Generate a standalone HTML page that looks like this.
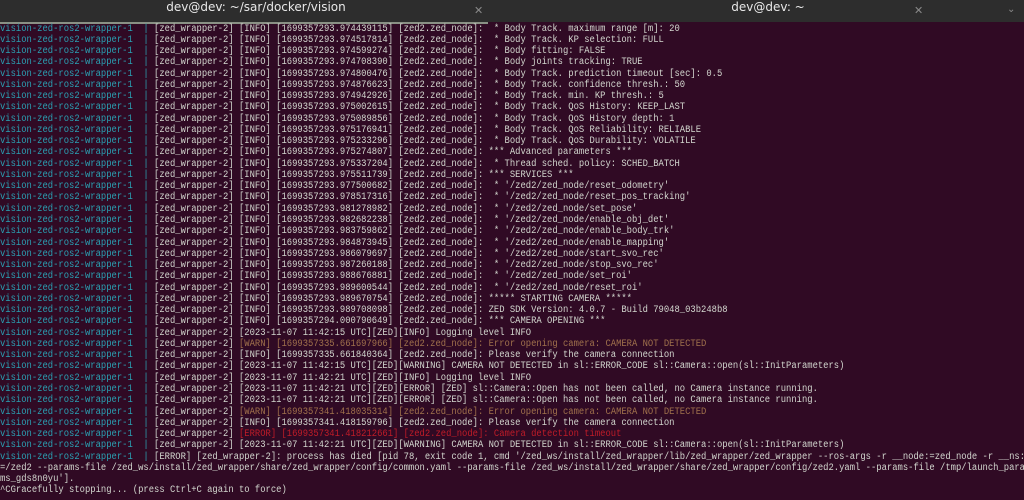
<!DOCTYPE html>
<html><head><meta charset="utf-8"><style>
html,body{margin:0;padding:0;width:1024px;height:500px;overflow:hidden;background:#300a24;}
.bar{position:absolute;left:0;top:0;width:1024px;height:22px;background:#2d2d2d;}
.t{position:absolute;top:0;height:22px;line-height:22px;color:#e8e8e8;font:12px "DejaVu Sans","Liberation Sans",sans-serif;text-align:center;}
.x{position:absolute;top:4px;color:#8a8a8a;font:11px "DejaVu Sans",sans-serif;}
.ul{position:absolute;left:0;top:22px;width:488px;height:2px;background:#8a9185;}
pre{position:absolute;left:0;top:23.5px;margin:0;font:10px/11.27px "Liberation Mono",monospace;color:#d3d7cf;white-space:pre;transform:scaleX(0.885);transform-origin:0 0;}
.c{color:#2aa1b3}.w{color:#a0714c}.e{color:#c01c28}
</style></head><body>
<div class="bar"></div>
<div class="t" style="left:0;width:512px">dev@dev: ~/sar/docker/vision</div>
<div class="x" style="left:474px">✕</div>
<div class="t" style="left:512px;width:512px">dev@dev: ~</div>
<div class="x" style="left:914px">✕</div>
<div class="x" style="left:1007px;font-size:10px">⌄</div>
<div class="ul"></div>
<pre><span class="c">vision-zed-ros2-wrapper-1  | </span>[zed_wrapper-2] [INFO] [1699357293.974439115] [zed2.zed_node]:  * Body Track. maximum range [m]: 20
<span class="c">vision-zed-ros2-wrapper-1  | </span>[zed_wrapper-2] [INFO] [1699357293.974517814] [zed2.zed_node]:  * Body Track. KP selection: FULL
<span class="c">vision-zed-ros2-wrapper-1  | </span>[zed_wrapper-2] [INFO] [1699357293.974599274] [zed2.zed_node]:  * Body fitting: FALSE
<span class="c">vision-zed-ros2-wrapper-1  | </span>[zed_wrapper-2] [INFO] [1699357293.974708390] [zed2.zed_node]:  * Body joints tracking: TRUE
<span class="c">vision-zed-ros2-wrapper-1  | </span>[zed_wrapper-2] [INFO] [1699357293.974800476] [zed2.zed_node]:  * Body Track. prediction timeout [sec]: 0.5
<span class="c">vision-zed-ros2-wrapper-1  | </span>[zed_wrapper-2] [INFO] [1699357293.974876623] [zed2.zed_node]:  * Body Track. confidence thresh.: 50
<span class="c">vision-zed-ros2-wrapper-1  | </span>[zed_wrapper-2] [INFO] [1699357293.974942926] [zed2.zed_node]:  * Body Track. min. KP thresh.: 5
<span class="c">vision-zed-ros2-wrapper-1  | </span>[zed_wrapper-2] [INFO] [1699357293.975002615] [zed2.zed_node]:  * Body Track. QoS History: KEEP_LAST
<span class="c">vision-zed-ros2-wrapper-1  | </span>[zed_wrapper-2] [INFO] [1699357293.975089856] [zed2.zed_node]:  * Body Track. QoS History depth: 1
<span class="c">vision-zed-ros2-wrapper-1  | </span>[zed_wrapper-2] [INFO] [1699357293.975176941] [zed2.zed_node]:  * Body Track. QoS Reliability: RELIABLE
<span class="c">vision-zed-ros2-wrapper-1  | </span>[zed_wrapper-2] [INFO] [1699357293.975233296] [zed2.zed_node]:  * Body Track. QoS Durability: VOLATILE
<span class="c">vision-zed-ros2-wrapper-1  | </span>[zed_wrapper-2] [INFO] [1699357293.975274807] [zed2.zed_node]: *** Advanced parameters ***
<span class="c">vision-zed-ros2-wrapper-1  | </span>[zed_wrapper-2] [INFO] [1699357293.975337204] [zed2.zed_node]:  * Thread sched. policy: SCHED_BATCH
<span class="c">vision-zed-ros2-wrapper-1  | </span>[zed_wrapper-2] [INFO] [1699357293.975511739] [zed2.zed_node]: *** SERVICES ***
<span class="c">vision-zed-ros2-wrapper-1  | </span>[zed_wrapper-2] [INFO] [1699357293.977500682] [zed2.zed_node]:  * '/zed2/zed_node/reset_odometry'
<span class="c">vision-zed-ros2-wrapper-1  | </span>[zed_wrapper-2] [INFO] [1699357293.978517316] [zed2.zed_node]:  * '/zed2/zed_node/reset_pos_tracking'
<span class="c">vision-zed-ros2-wrapper-1  | </span>[zed_wrapper-2] [INFO] [1699357293.981278982] [zed2.zed_node]:  * '/zed2/zed_node/set_pose'
<span class="c">vision-zed-ros2-wrapper-1  | </span>[zed_wrapper-2] [INFO] [1699357293.982682238] [zed2.zed_node]:  * '/zed2/zed_node/enable_obj_det'
<span class="c">vision-zed-ros2-wrapper-1  | </span>[zed_wrapper-2] [INFO] [1699357293.983759862] [zed2.zed_node]:  * '/zed2/zed_node/enable_body_trk'
<span class="c">vision-zed-ros2-wrapper-1  | </span>[zed_wrapper-2] [INFO] [1699357293.984873945] [zed2.zed_node]:  * '/zed2/zed_node/enable_mapping'
<span class="c">vision-zed-ros2-wrapper-1  | </span>[zed_wrapper-2] [INFO] [1699357293.986079697] [zed2.zed_node]:  * '/zed2/zed_node/start_svo_rec'
<span class="c">vision-zed-ros2-wrapper-1  | </span>[zed_wrapper-2] [INFO] [1699357293.987260188] [zed2.zed_node]:  * '/zed2/zed_node/stop_svo_rec'
<span class="c">vision-zed-ros2-wrapper-1  | </span>[zed_wrapper-2] [INFO] [1699357293.988676881] [zed2.zed_node]:  * '/zed2/zed_node/set_roi'
<span class="c">vision-zed-ros2-wrapper-1  | </span>[zed_wrapper-2] [INFO] [1699357293.989600544] [zed2.zed_node]:  * '/zed2/zed_node/reset_roi'
<span class="c">vision-zed-ros2-wrapper-1  | </span>[zed_wrapper-2] [INFO] [1699357293.989670754] [zed2.zed_node]: ***** STARTING CAMERA *****
<span class="c">vision-zed-ros2-wrapper-1  | </span>[zed_wrapper-2] [INFO] [1699357293.989708098] [zed2.zed_node]: ZED SDK Version: 4.0.7 - Build 79048_03b248b8
<span class="c">vision-zed-ros2-wrapper-1  | </span>[zed_wrapper-2] [INFO] [1699357294.000790649] [zed2.zed_node]: *** CAMERA OPENING ***
<span class="c">vision-zed-ros2-wrapper-1  | </span>[zed_wrapper-2] [2023-11-07 11:42:15 UTC][ZED][INFO] Logging level INFO
<span class="c">vision-zed-ros2-wrapper-1  | </span>[zed_wrapper-2] <span class="w">[WARN] [1699357335.661697966] [zed2.zed_node]: Error opening camera: CAMERA NOT DETECTED</span>
<span class="c">vision-zed-ros2-wrapper-1  | </span>[zed_wrapper-2] [INFO] [1699357335.661840364] [zed2.zed_node]: Please verify the camera connection
<span class="c">vision-zed-ros2-wrapper-1  | </span>[zed_wrapper-2] [2023-11-07 11:42:15 UTC][ZED][WARNING] CAMERA NOT DETECTED in sl::ERROR_CODE sl::Camera::open(sl::InitParameters)
<span class="c">vision-zed-ros2-wrapper-1  | </span>[zed_wrapper-2] [2023-11-07 11:42:21 UTC][ZED][INFO] Logging level INFO
<span class="c">vision-zed-ros2-wrapper-1  | </span>[zed_wrapper-2] [2023-11-07 11:42:21 UTC][ZED][ERROR] [ZED] sl::Camera::Open has not been called, no Camera instance running.
<span class="c">vision-zed-ros2-wrapper-1  | </span>[zed_wrapper-2] [2023-11-07 11:42:21 UTC][ZED][ERROR] [ZED] sl::Camera::Open has not been called, no Camera instance running.
<span class="c">vision-zed-ros2-wrapper-1  | </span>[zed_wrapper-2] <span class="w">[WARN] [1699357341.418035314] [zed2.zed_node]: Error opening camera: CAMERA NOT DETECTED</span>
<span class="c">vision-zed-ros2-wrapper-1  | </span>[zed_wrapper-2] [INFO] [1699357341.418159796] [zed2.zed_node]: Please verify the camera connection
<span class="c">vision-zed-ros2-wrapper-1  | </span>[zed_wrapper-2] <span class="e">[ERROR] [1699357341.418212661] [zed2.zed_node]: Camera detection timeout</span>
<span class="c">vision-zed-ros2-wrapper-1  | </span>[zed_wrapper-2] [2023-11-07 11:42:21 UTC][ZED][WARNING] CAMERA NOT DETECTED in sl::ERROR_CODE sl::Camera::open(sl::InitParameters)
<span class="c">vision-zed-ros2-wrapper-1  | </span>[ERROR] [zed_wrapper-2]: process has died [pid 78, exit code 1, cmd '/zed_ws/install/zed_wrapper/lib/zed_wrapper/zed_wrapper --ros-args -r __node:=zed_node -r __ns:
=/zed2 --params-file /zed_ws/install/zed_wrapper/share/zed_wrapper/config/common.yaml --params-file /zed_ws/install/zed_wrapper/share/zed_wrapper/config/zed2.yaml --params-file /tmp/launch_para
ms_gds8n0yu'].
^CGracefully stopping... (press Ctrl+C again to force)</pre>
</body></html>
